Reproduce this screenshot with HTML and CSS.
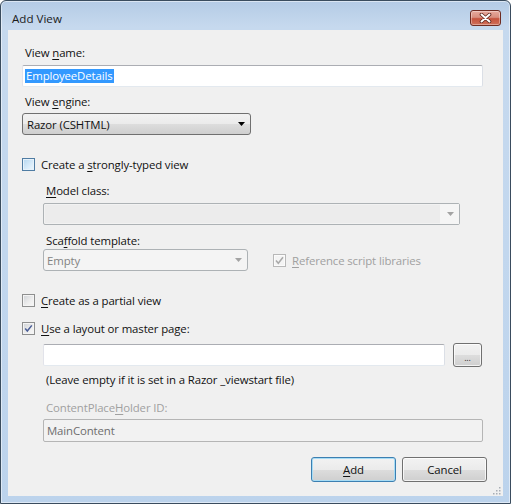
FILE: index.html
```html
<!DOCTYPE html>
<html>
<head>
<meta charset="utf-8">
<title>Add View</title>
<link rel="stylesheet" href="styles.css">
</head>
<body>
<div class="window">
  <div class="titlebar">
    <span class="title">Add View</span>
    <div class="close">
      <svg width="13" height="10" viewBox="0 0 13 10">
        <path d="M2.5 1.5 L10.5 8.5 M10.5 1.5 L2.5 8.5" stroke="#5a2219" stroke-width="3.6" stroke-linecap="round" fill="none"/>
        <path d="M2.5 1.5 L10.5 8.5 M10.5 1.5 L2.5 8.5" stroke="#ffffff" stroke-width="2" stroke-linecap="round" fill="none"/>
      </svg>
    </div>
  </div>
  <div class="client">
    <div class="label name-label">View <u>n</u>ame:</div>
    <div class="textbox name-box"><span class="sel">EmployeeDetails</span></div>
    <div class="label engine-label">View <u>e</u>ngine:</div>
    <div class="combo engine-combo">
      <span class="combo-text">Razor (CSHTML)</span>
      <svg class="arrow" width="7" height="4" viewBox="0 0 7 4"><polygon points="0,0 7,0 3.5,4" fill="#000"/></svg>
    </div>
    <div class="check typed-row">
      <span class="cb cb-hot"></span>
      <span>Create a <u>s</u>trongly-typed view</span>
    </div>
    <div class="indent">
      <div class="label model-label"><u>M</u>odel class:</div>
      <div class="combo-dis model-combo">
        <span class="combo-field"></span>
        <span class="combo-drop"><svg width="7" height="4" viewBox="0 0 7 4"><polygon points="0,0 7,0 3.5,4" fill="#a3a3a3"/></svg></span>
      </div>
      <div class="label scaffold-label">Sca<u>f</u>fold template:</div>
      <div class="scaffold-row">
        <div class="list-dis scaffold-combo">
          <span class="dis-text">Empty</span>
          <svg class="arrow" width="7" height="4" viewBox="0 0 7 4"><polygon points="0,0 7,0 3.5,4" fill="#a3a3a3"/></svg>
        </div>
        <div class="check ref-check">
          <span class="cb cb-dis">
            <svg width="11" height="11" viewBox="0 0 11 11"><polyline points="2,5.5 4.3,8.3 9,2.3" fill="none" stroke="#a9a9a9" stroke-width="1.5"/></svg>
          </span>
          <span class="dis-label"><u>R</u>eference script libraries</span>
        </div>
      </div>
    </div>
    <div class="check partial-row">
      <span class="cb"></span>
      <span><u>C</u>reate as a partial view</span>
    </div>
    <div class="check layout-check">
      <span class="cb">
        <svg width="11" height="11" viewBox="0 0 11 11"><polyline points="2.2,5.6 4.3,8 8.8,2.4" fill="none" stroke="#4a5d96" stroke-width="1.5"/></svg>
      </span>
      <span><u>U</u>se a layout or master page:</span>
    </div>
    <div class="indent">
      <div class="layout-row">
        <div class="textbox layout-box"></div>
        <div class="btn browse-btn">...</div>
      </div>
      <div class="label hint-label">(Leave empty if it is set in a Razor _viewstart file)</div>
      <div class="label dis-label cph-label">ContentPlace<u>H</u>older ID:</div>
      <div class="textbox-dis main-box">MainContent</div>
    </div>
    <div class="buttons">
      <div class="btn btn-default"><span><u>A</u>dd</span></div>
      <div class="btn">Cancel</div>
    </div>
    <svg class="grip" width="9" height="9" viewBox="0 0 9 9">
      <rect x="7" y="1" width="1.5" height="1.5" fill="#a7adb5"/>
      <rect x="4" y="4" width="1.5" height="1.5" fill="#a7adb5"/>
      <rect x="7" y="4" width="1.5" height="1.5" fill="#a7adb5"/>
      <rect x="1" y="7" width="1.5" height="1.5" fill="#a7adb5"/>
      <rect x="4" y="7" width="1.5" height="1.5" fill="#a7adb5"/>
      <rect x="7" y="7" width="1.5" height="1.5" fill="#a7adb5"/>
    </svg>
  </div>
</div>
</body>
</html>
```

FILE: styles.css
```css
* { box-sizing: border-box; }
html, body { margin: 0; padding: 0; }
body {
  background: #ffffff;
  font-family: "Segoe UI", "Open Sans", "Noto Sans", sans-serif;
  font-size: 11.4px;
  line-height: 15px;
  letter-spacing: -0.12px;
  color: #111;
}
u { text-decoration: underline; text-underline-offset: 2px; }

.window {
  width: 511px;
  height: 504px;
  border: 1px solid #3a4c5e;
  border-radius: 6px 6px 0 0;
  background: linear-gradient(#b4cbe5 0px, #c6d9ee 26px, #c2d7ee 50%, #bcd3ec 100%);
  box-shadow: inset 0 0 0 1px rgba(255,255,255,0.5);
  padding: 0 7px 7px;
  display: flex;
  flex-direction: column;
}

.titlebar {
  height: 29px;
  flex-shrink: 0;
  display: flex;
  align-items: flex-start;
}
.title {
  margin: 10px 0 0 4px;
  font-size: 11.6px;
  letter-spacing: 0;
  color: #1b1b1b;
}
.close {
  margin: 9px 2px 0 auto;
  width: 31px;
  height: 16px;
  border: 1px solid #6e2c22;
  border-radius: 3px;
  background: linear-gradient(#e7aa9d 0%, #d88f80 45%, #c5533d 55%, #d0705a 100%);
  box-shadow: inset 0 0 0 1px rgba(255,255,255,0.35);
  display: flex;
  align-items: center;
  justify-content: center;
}

.client {
  position: relative;
  height: 466px;
  background: #f0f0f0;
  padding: 15px 0 0 14px;
  display: flex;
  flex-direction: column;
  align-items: flex-start;
}

.label { height: 15px; padding-left: 3px; white-space: nowrap; }
.dis-label { color: #a0a0a0; }

.textbox {
  height: 22px;
  background: #fff;
  border: 1px solid;
  border-color: #abadb3 #dbdfe6 #e3e9ef #e2e3ea;
  border-radius: 2px;
  display: flex;
  align-items: center;
  padding-left: 2px;
}
.sel {
  background: #3399ff;
  color: #fff;
  height: 14px;
  line-height: 14px;
  padding: 0 1px;
}

.name-box { width: 461px; margin-top: 5px; }
.engine-label { margin-top: 7px; }

.combo {
  height: 22px;
  border: 1px solid #707070;
  border-radius: 3px;
  background: linear-gradient(#f2f2f2 0%, #ebebeb 50%, #dddddd 50%, #cfcfcf 100%);
  display: flex;
  align-items: center;
  padding: 0 5px 0 4px;
}
.combo-text { flex: 1; }
.engine-combo { width: 229px; margin-top: 4px; }

.check {
  display: flex;
  align-items: center;
  gap: 6px;
  height: 15px;
  white-space: nowrap;
}
.cb {
  width: 13px;
  height: 13px;
  border: 1px solid #8e8f8f;
  background: linear-gradient(135deg, #cfd2d6 0%, #eeeeee 60%, #f8f8f8 100%);
  box-shadow: inset 0 0 0 1px #f4f4f4;
  display: flex;
  align-items: center;
  justify-content: center;
  flex-shrink: 0;
}
.cb-hot {
  border-color: #4f7ca3;
  background: linear-gradient(135deg, #b4d6ef 0%, #d9ecfa 60%, #eef7fd 100%);
  box-shadow: inset 0 0 0 1px #e6f2fb;
}
.cb-dis {
  border-color: #b8b8b8;
  background: #f4f4f4;
  box-shadow: inset 0 0 0 1px #fbfbfb;
}

.typed-row { margin-top: 22px; }

.indent {
  margin-left: 21px;
  display: flex;
  flex-direction: column;
  align-items: flex-start;
}
.model-label { margin-top: 11px; }

.combo-dis {
  width: 417px;
  height: 22px;
  margin-top: 5px;
  border: 1px solid #adb2b5;
  border-radius: 2px;
  background: #ececec;
  display: flex;
  box-shadow: inset 0 0 0 1px #f2f2f2;
}
.combo-field { flex: 1; }
.combo-drop {
  width: 19px;
  background: #f5f5f5;
  display: flex;
  align-items: center;
  justify-content: center;
  padding-left: 2px;
}

.scaffold-label { margin-top: 8px; }
.scaffold-row {
  margin-top: 1px;
  display: flex;
  align-items: center;
  gap: 25px;
}
.list-dis {
  height: 22px;
  border: 1px solid #adb2b5;
  border-radius: 3px;
  background: #f4f4f4;
  display: flex;
  align-items: center;
  padding: 0 5px 0 3px;
}
.scaffold-combo { width: 205px; }
.dis-text { flex: 1; color: #838383; }

.partial-row { margin-top: 22px; }
.layout-check { margin-top: 13px; }

.layout-row {
  margin-top: 7px;
  height: 24px;
  display: flex;
  align-items: center;
  gap: 8px;
}
.layout-box { width: 402px; }

.btn {
  border: 1px solid #707070;
  border-radius: 3px;
  background: linear-gradient(#f2f2f2 0%, #ebebeb 50%, #dddddd 50%, #cfcfcf 100%);
  box-shadow: inset 0 0 0 1px rgba(255,255,255,0.75);
  display: flex;
  align-items: center;
  justify-content: center;
  white-space: nowrap;
}
.browse-btn {
  width: 29px;
  height: 24px;
  font-size: 9px;
  line-height: 9px;
  padding-top: 4px;
  color: #333;
}

.hint-label { margin-top: 5px; }
.cph-label { margin-top: 13px; }

.textbox-dis {
  height: 23px;
  border: 1px solid #b5b5b5;
  border-radius: 2px;
  background: #f2f2f2;
  color: #6d6d6d;
  display: flex;
  align-items: center;
  padding-left: 3px;
}
.main-box { width: 440px; margin-top: 4px; }

.buttons {
  margin-top: 15px;
  width: 465px;
  display: flex;
  justify-content: flex-end;
  gap: 6px;
}
.buttons .btn { width: 85px; height: 25px; }
.btn-default {
  border-color: #3c7fb1;
  box-shadow: inset 0 0 0 1px #a7dcf5;
}

.grip {
  position: absolute;
  right: 2px;
  bottom: 1px;
}
```
